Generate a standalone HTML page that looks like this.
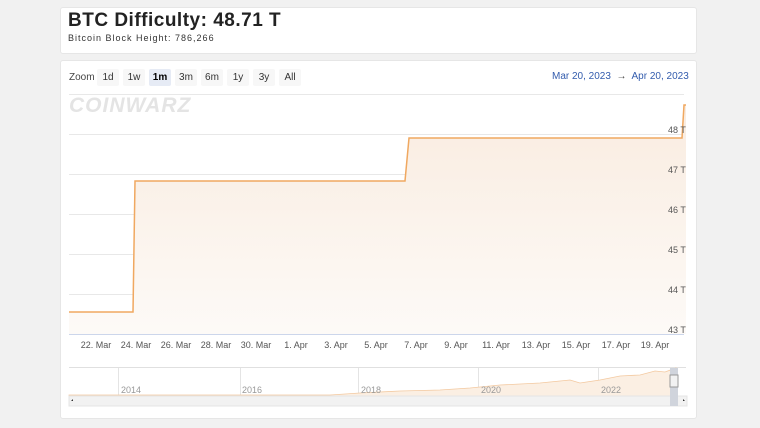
<!DOCTYPE html>
<html><head><style>
body{margin:0;width:760px;height:428px;background:#f1f1f1;font-family:"Liberation Sans",sans-serif;position:relative;overflow:hidden}
.card{position:absolute;background:#fff;border:1px solid #e6e6e6;border-radius:3px}
.t{position:absolute;white-space:nowrap}
.btn{position:absolute;top:69px;height:17px;line-height:17px;font-size:10px;color:#333;background:#f7f7f7;border-radius:2px;text-align:center}
.xl{position:absolute;top:340px;font-size:9px;color:#555;width:50px;text-align:center;margin-left:-25px}
.yl{position:absolute;left:668px;font-size:9px;color:#555}
</style></head><body>
<div class="card" style="left:60px;top:7px;width:635px;height:45px"></div>
<div class="t" style="left:68px;top:10px;font-size:19px;font-weight:bold;color:#222;letter-spacing:0.5px">BTC Difficulty: 48.71 T</div>
<div class="t" style="left:68px;top:33px;font-size:9px;color:#333;letter-spacing:1px">Bitcoin Block Height: 786,266</div>
<div class="card" style="left:60px;top:60px;width:635px;height:357px"></div>
<div class="t" style="left:69px;top:72px;font-size:10px;color:#444">Zoom</div>
<div class="btn" style="left:97px;width:22px">1d</div>
<div class="btn" style="left:123px;width:22px">1w</div>
<div class="btn" style="left:149px;width:22px;background:#e6ebf5;font-weight:bold;color:#000">1m</div>
<div class="btn" style="left:175px;width:22px">3m</div>
<div class="btn" style="left:201px;width:22px">6m</div>
<div class="btn" style="left:227px;width:22px">1y</div>
<div class="btn" style="left:253px;width:22px">3y</div>
<div class="btn" style="left:279px;width:22px">All</div>
<div class="t" style="left:552px;top:71px;font-size:10px;color:#335cad">Mar 20, 2023 &nbsp;<span style="color:#444">→</span>&nbsp; Apr 20, 2023</div>
<div class="t" style="left:69px;top:94px;font-size:21px;font-weight:900;color:#e4e4e4;font-style:italic;letter-spacing:1px">COINWARZ</div>
<svg style="position:absolute;left:0;top:0" width="760" height="428">
<defs><linearGradient id="g" x1="0" y1="0" x2="0" y2="1"><stop offset="0" stop-color="#f9ece0"/><stop offset="1" stop-color="#fdfaf7"/></linearGradient></defs>
<g stroke="#e8e8e8" stroke-width="1">
<line x1="69" x2="684" y1="94.5" y2="94.5"/><line x1="69" x2="684" y1="134.5" y2="134.5"/><line x1="69" x2="684" y1="174.5" y2="174.5"/><line x1="69" x2="684" y1="214.5" y2="214.5"/><line x1="69" x2="684" y1="254.5" y2="254.5"/><line x1="69" x2="684" y1="294.5" y2="294.5"/>
</g>
<path d="M69 312 L133 312 L135 181 L405 181 L409 138 L682 138 L684 105 L686 105 L686 334 L69 334Z" fill="url(#g)"/>
<path d="M69 312 L133 312 L135 181 L405 181 L409 138 L682 138 L684 105 L686 105" fill="none" stroke="#f0a860" stroke-width="1.5"/>
<line x1="69" x2="684" y1="334.5" y2="334.5" stroke="#ccd6eb"/>
<line x1="69" x2="686" y1="367.5" y2="367.5" stroke="#e0e0e0"/>
<g stroke="#e4e4e4"><line x1="118.5" x2="118.5" y1="368" y2="396"/><line x1="240.5" x2="240.5" y1="368" y2="396"/><line x1="358.5" x2="358.5" y1="368" y2="396"/><line x1="478.5" x2="478.5" y1="368" y2="396"/><line x1="598.5" x2="598.5" y1="368" y2="396"/></g>
<path d="M69 395 L330 395 L360 393 L400 391 L440 390 L470 388 L500 385 L540 383 L570 380 L580 383 L600 380 L620 376 L640 375 L655 371 L665 372 L676 368 L676 396 L69 396Z" fill="#fbefe3" stroke="#f3c9a0" stroke-width="0.8"/>
<rect x="69" y="396" width="618" height="10" fill="#f2f2f2" stroke="#e4e4e4"/>
<rect x="670" y="368" width="8" height="38" fill="#d0d4dc"/>
<rect x="670" y="375" width="8" height="12" fill="#f2f2f2" stroke="#999"/>
<path d="M73 401 l-2 0 l2-2z M683 401 l2 0 l-2-2z" fill="#333"/>
</svg>
<div class="t" style="left:121px;top:385px;font-size:9px;color:#999">2014</div>
<div class="t" style="left:242px;top:385px;font-size:9px;color:#999">2016</div>
<div class="t" style="left:361px;top:385px;font-size:9px;color:#999">2018</div>
<div class="t" style="left:481px;top:385px;font-size:9px;color:#999">2020</div>
<div class="t" style="left:601px;top:385px;font-size:9px;color:#999">2022</div>
<div class="xl" style="left:96px">22. Mar</div><div class="xl" style="left:136px">24. Mar</div><div class="xl" style="left:176px">26. Mar</div><div class="xl" style="left:216px">28. Mar</div><div class="xl" style="left:256px">30. Mar</div><div class="xl" style="left:296px">1. Apr</div><div class="xl" style="left:336px">3. Apr</div><div class="xl" style="left:376px">5. Apr</div><div class="xl" style="left:416px">7. Apr</div><div class="xl" style="left:456px">9. Apr</div><div class="xl" style="left:496px">11. Apr</div><div class="xl" style="left:536px">13. Apr</div><div class="xl" style="left:576px">15. Apr</div><div class="xl" style="left:616px">17. Apr</div><div class="xl" style="left:655px">19. Apr</div>
<div class="yl" style="top:125px">48 T</div><div class="yl" style="top:165px">47 T</div><div class="yl" style="top:205px">46 T</div><div class="yl" style="top:245px">45 T</div><div class="yl" style="top:285px">44 T</div><div class="yl" style="top:325px">43 T</div>
</body></html>
